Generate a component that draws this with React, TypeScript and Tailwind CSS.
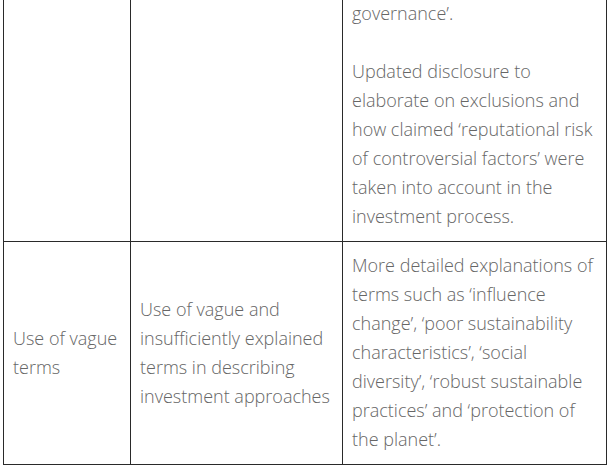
const cell = "border border-[#2a2a2a] px-[9px] pt-[9px] pb-[10px] align-middle"

export default function App() {
  return (
    <div className="w-[612px] h-[468px] overflow-hidden bg-white font-['Open_Sans',sans-serif] font-light text-[18px] leading-[29px] text-[#666]">
      <table className="-mt-[11px] ml-[3px] w-[603px] table-fixed border-collapse">
        <colgroup>
          <col className="w-[127px]" />
          <col className="w-[212px]" />
          <col className="w-[264px]" />
        </colgroup>
        <tbody>
          {/* ROW: cut off at top */}
          <tr>
            <td className={cell}></td>
            <td className={cell}></td>
            <td className={cell + " align-top"}>
              <p className="mb-[29px]">governance’.</p>
              <p>
                Updated disclosure to elaborate on exclusions and how claimed ‘reputational risk of
                controversial factors’ were taken into account in the investment process.
              </p>
            </td>
          </tr>
          {/* ROW */}
          <tr>
            <td className={cell}>Use of vague terms</td>
            <td className={cell}>Use of vague and insufficiently explained terms in describing investment approaches</td>
            <td className={cell}>
              More detailed explanations of terms such as ‘influence change’, ‘poor sustainability
              characteristics’, ‘social diversity’, ‘robust sustainable practices’ and ‘protection of
              the planet’.
            </td>
          </tr>
        </tbody>
      </table>
    </div>
  )
}
